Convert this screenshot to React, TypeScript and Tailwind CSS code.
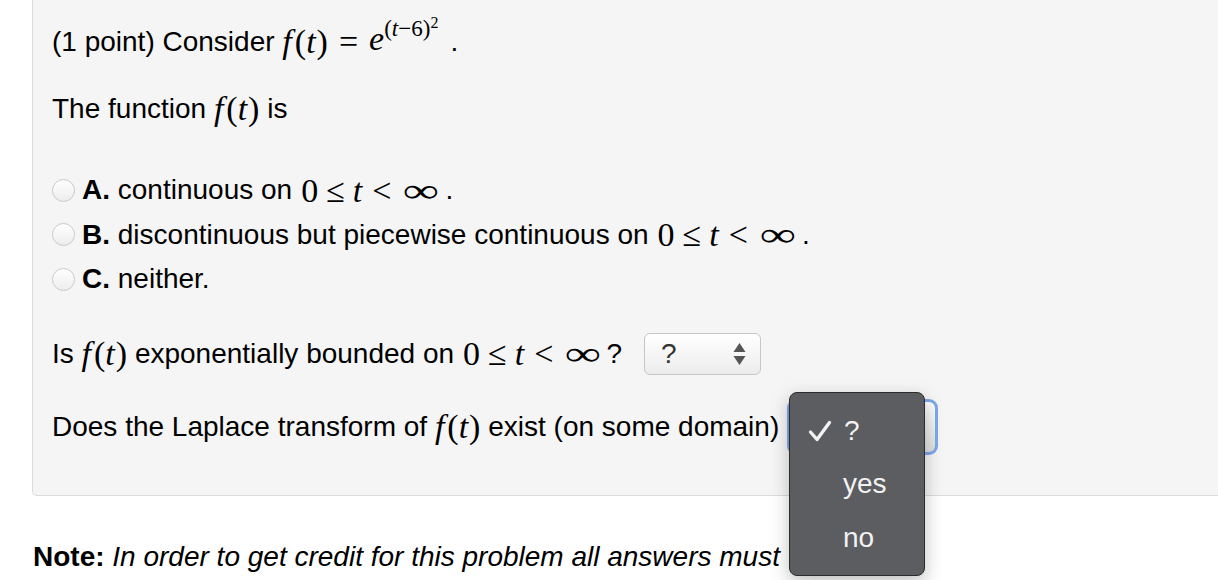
import React from "react";

const F = () => (
  <span className="font-['Liberation_Serif'] text-[34px] whitespace-nowrap">
    <i className="pr-[3px]">f</i>(<i className="pr-[1px]">t</i>)
  </span>
);

const Inf = () => (
  <span className="inline-block w-[40px] text-center scale-x-[1.5]">∞</span>
);

const Range = () => (
  <span className="ml-[9px] font-['Liberation_Serif'] text-[34px] whitespace-nowrap">
    0<span className="mx-[8px]">≤</span>
    <i>t</i>
    <span className="mx-[10px]">&lt;</span>
    <Inf />
  </span>
);

const Radio = () => (
  <span className="inline-block w-[23px] h-[23px] rounded-full border border-[#c9c9c9] bg-gradient-to-b from-white to-[#ededed] shadow-[inset_0_1px_1px_rgba(255,255,255,0.9)] mr-[7px] shrink-0" />
);

const Arrows = () => (
  <svg width="13" height="24" viewBox="0 0 13 24" className="shrink-0">
    <path d="M6.5 1 L12.5 10 L0.5 10 Z" fill="#555" />
    <path d="M6.5 23 L12.5 14 L0.5 14 Z" fill="#555" />
  </svg>
);

const options = [
  { key: "A.", text: "continuous on", range: true },
  { key: "B.", text: "discontinuous but piecewise continuous on", range: true },
  { key: "C.", text: "neither.", range: false },
];

export default function App() {
  return (
    <div className="relative h-[580px] overflow-hidden bg-white text-[28px] text-black font-['Liberation_Sans',Arial,sans-serif]">
      <div className="ml-[32px] h-[496px] border border-t-0 border-r-0 border-[#dcdcdc] rounded-bl-[5px] bg-[#f5f5f5] pl-[19px] pt-[27px]">
        <div className="leading-[30px] h-[30px] flex items-center whitespace-nowrap">
          <span>(1 point) Consider&nbsp;</span>
          <F />
          <span className="font-['Liberation_Serif'] text-[34px] mx-[11px]">=</span>
          <span className="font-['Liberation_Serif'] text-[34px] whitespace-nowrap">
            <i>e</i>
            <span className="relative -top-[14px] text-[23px]">
              (<i>t</i>−6)
              <span className="relative -top-[8px] text-[16px]">2</span>
            </span>
          </span>
          <span className="ml-[12px]">.</span>
        </div>

        <div className="mt-[37px] leading-[30px] h-[30px] flex items-center whitespace-nowrap">
          <span>The function&nbsp;</span>
          <F />
          <span>&nbsp;is</span>
        </div>

        <div className="mt-[44px] flex flex-col">
          {options.map((o) => (
            <div key={o.key} className="h-[44.5px] flex items-center whitespace-nowrap">
              <Radio />
              <span className="font-bold">{o.key}</span>
              <span>&nbsp;{o.text}</span>
              {o.range && (
                <>
                  <Range />
                  <span className="ml-[4px]">.</span>
                </>
              )}
            </div>
          ))}
        </div>

        <div className="mt-[31px] h-[42px] flex items-center whitespace-nowrap">
          <span>Is&nbsp;</span>
          <F />
          <span>&nbsp;exponentially bounded on</span>
          <Range />
          <span className="ml-[3px]">?</span>
          <div className="ml-[22px] w-[117px] h-[42px] rounded-[6px] border border-[#c6c6c6] bg-gradient-to-b from-white to-[#ececec] flex items-center justify-between pl-[16px] pr-[14px]">
            <span className="text-[#333]">?</span>
            <Arrows />
          </div>
        </div>

        <div className="mt-[31px] h-[42px] flex items-center whitespace-nowrap">
          <span>Does the Laplace transform of&nbsp;</span>
          <F />
          <span>&nbsp;exist (on some domain)</span>
          <div className="ml-[8px] w-[151px] h-[56px] shrink-0 rounded-[9px] border-[3px] border-[#7ea8ea] bg-gradient-to-b from-white to-[#dedede] flex items-center justify-between pl-[16px] pr-[12px]">
            <span className="text-[#333]">?</span>
            <Arrows />
          </div>
        </div>
      </div>

      <p className="ml-[33px] mt-[46px] leading-[30px] whitespace-nowrap">
        <span className="font-bold">Note:</span>{" "}
        <i>In order to get credit for this problem all answers must</i>
      </p>

      <div className="absolute left-[789px] top-[392px] w-[136px] h-[184px] rounded-[8px] border border-[#2b2b2b] bg-[#5c5d60] shadow-[0_6px_18px_rgba(0,0,0,0.25)] pt-[11px] text-[#f2f2f2]">
        <div className="h-[53.5px] flex items-center">
          <svg width="24" height="22" viewBox="0 0 24 22" className="ml-[18px] mr-[12px]">
            <path d="M2.5 12 L9 19.5 L21.5 2.5" fill="none" stroke="#f2f2f2" strokeWidth="3.4" strokeLinecap="round" strokeLinejoin="round" />
          </svg>
          <span>?</span>
        </div>
        <div className="h-[53.5px] flex items-center pl-[53px]">yes</div>
        <div className="h-[53.5px] flex items-center pl-[53px]">no</div>
      </div>
    </div>
  );
}
